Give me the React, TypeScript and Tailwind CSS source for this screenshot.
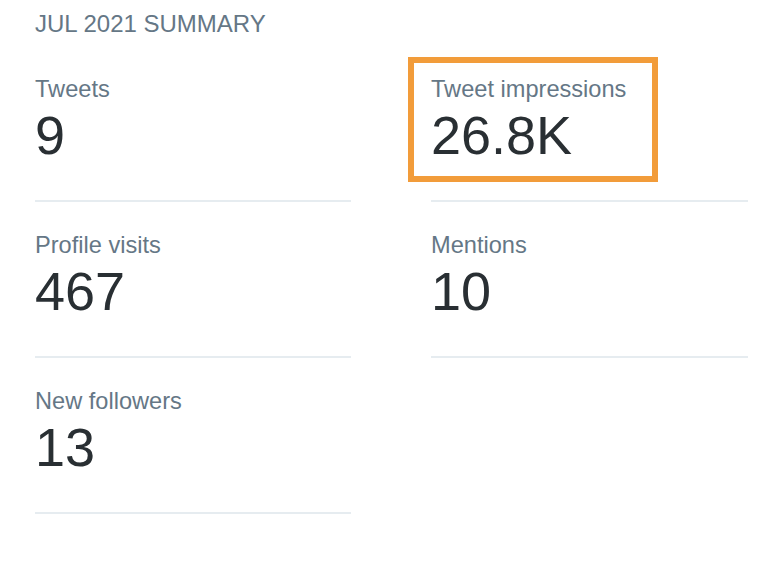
import React from "react";

type Stat = {
  label: string;
  value: string;
  highlight?: boolean;
};

const stats: Stat[] = [
  { label: "Tweets", value: "9" },
  { label: "Tweet impressions", value: "26.8K", highlight: true },
  { label: "Profile visits", value: "467" },
  { label: "Mentions", value: "10" },
  { label: "New followers", value: "13" },
];

export default function App() {
  return (
    <div className="min-h-[582px] w-[768px] bg-white pl-[35px] font-['Liberation_Sans',Arial,sans-serif]">
      {/* 헤더 */}
      <div className="pt-[10px] text-[24px] leading-[28px] text-[#657786]">JUL 2021 SUMMARY</div>

      {/* 요약 그리드 */}
      <div className="mt-[8px] grid grid-cols-[316px_317px] gap-x-[80px]">
        {stats.map((s) => (
          <StatCell key={s.label} stat={s} />
        ))}
      </div>
    </div>
  );
}

function StatCell({ stat }: { stat: Stat }) {
  return (
    <div className="relative border-b-2 border-[#e6ecf0] pt-[30px] pb-[38px]">
      <div className="text-[23.6px] leading-[27px] text-[#657786]">{stat.label}</div>
      <div className="mt-[5px] text-[54px] leading-[54px] text-[#292f33]">{stat.value}</div>
      {stat.highlight && (
        <div className="pointer-events-none absolute left-[-23px] top-[11px] h-[125px] w-[250px] border-[6px] border-[#f29c3a]" />
      )}
    </div>
  );
}
